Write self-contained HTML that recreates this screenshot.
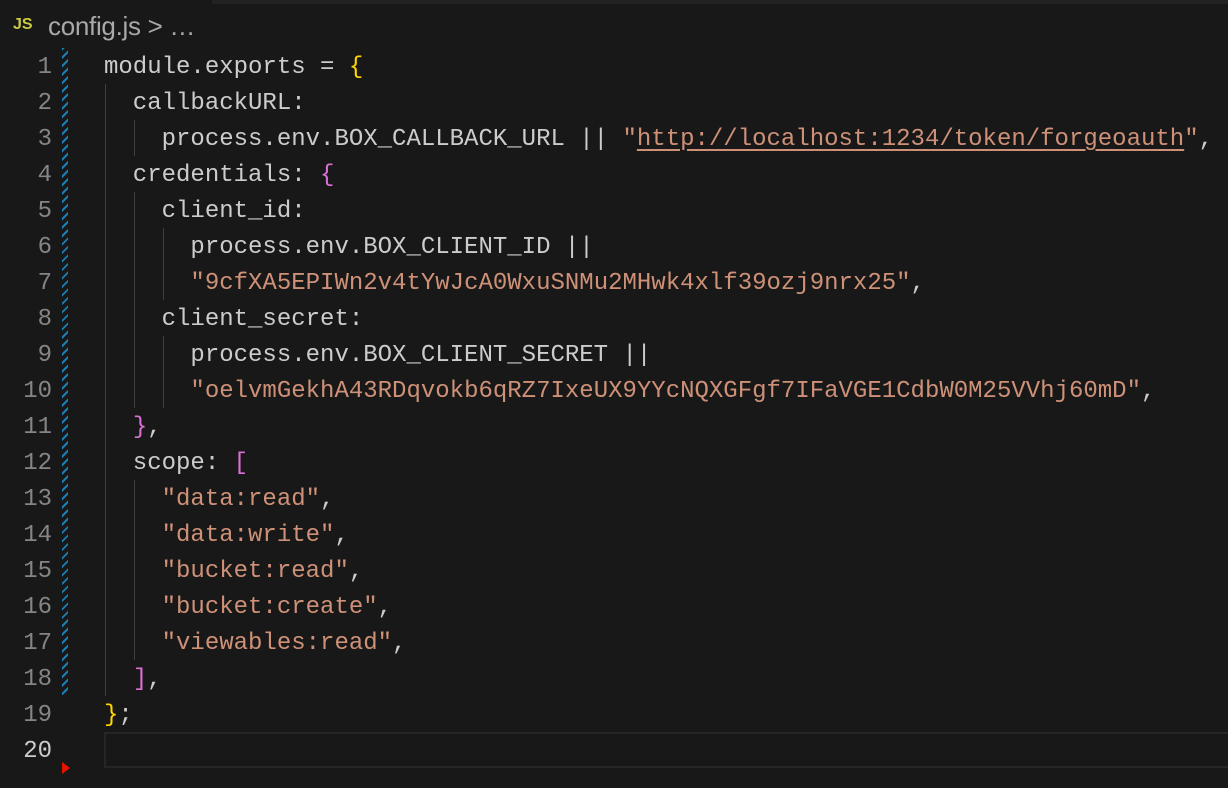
<!DOCTYPE html>
<html><head><style>
html,body{margin:0;padding:0;background:#181818;width:1228px;height:788px;overflow:hidden}
.hdr{position:absolute;left:0;top:0;width:1228px;height:48px;font-family:"Liberation Sans",sans-serif}
.top{position:absolute;left:212px;top:0;width:1016px;height:4px;background:#222}
.js{position:absolute;left:13px;top:16px;color:#cbcb41;font-weight:bold;font-size:16px}
.fn{position:absolute;left:48px;top:11px;color:#a9a9a9;font-size:26px;letter-spacing:-0.3px}
.ln{position:absolute;left:0;width:52px;text-align:right;color:#858585;font-family:"Liberation Mono",monospace;font-size:24px;line-height:36px}
.code{position:absolute;left:104px;top:50px;font-family:"Liberation Mono",monospace;font-size:24px;line-height:36px;color:#cccccc;white-space:pre}
.s{color:#ce9178}.u{color:#ce9178;text-decoration:underline;text-underline-offset:4px}
.y{color:#ffd700}.m{color:#da70d6}
.g{position:absolute;width:1px;background:#404040}
.hatch{position:absolute;left:62px;top:48px;width:6px;height:647px;background:repeating-linear-gradient(135deg,#1b7fb5 0 2px,transparent 2px 6px)}
.cur{position:absolute;left:104px;top:732px;width:1124px;height:32px;border:2px solid #262626;border-right:none}
</style></head><body>
<div class="hdr"><div class="top"></div><span class="js">JS</span><span class="fn">config.js &gt; …</span></div>
<div class="hatch"></div>
<div class="cur"></div>
<div class="g" style="left:105px;top:84px;height:612px"></div>
<div class="g" style="left:134px;top:120px;height:36px"></div>
<div class="g" style="left:134px;top:192px;height:216px"></div>
<div class="g" style="left:163px;top:228px;height:72px"></div>
<div class="g" style="left:163px;top:336px;height:72px"></div>
<div class="g" style="left:134px;top:480px;height:180px"></div>
<div class="ln" style="top:50px">1<br>2<br>3<br>4<br>5<br>6<br>7<br>8<br>9<br>10<br>11<br>12<br>13<br>14<br>15<br>16<br>17<br>18<br>19<br><span style="color:#ccc">20</span></div>
<div style="position:absolute;left:62px;top:762px;width:0;height:0;border-top:6px solid transparent;border-bottom:6px solid transparent;border-left:8px solid #e51400"></div>
<div class="code">module.exports = <span class="y">{</span>
  callbackURL:
    process.env.BOX_CALLBACK_URL || <span class="s">"</span><span class="u">http://localhost:1234/token/forgeoauth</span><span class="s">"</span>,
  credentials: <span class="m">{</span>
    client_id:
      process.env.BOX_CLIENT_ID ||
      <span class="s">"9cfXA5EPIWn2v4tYwJcA0WxuSNMu2MHwk4xlf39ozj9nrx25"</span>,
    client_secret:
      process.env.BOX_CLIENT_SECRET ||
      <span class="s">"oelvmGekhA43RDqvokb6qRZ7IxeUX9YYcNQXGFgf7IFaVGE1CdbW0M25VVhj60mD"</span>,
  <span class="m">}</span>,
  scope: <span class="m">[</span>
    <span class="s">"data:read"</span>,
    <span class="s">"data:write"</span>,
    <span class="s">"bucket:read"</span>,
    <span class="s">"bucket:create"</span>,
    <span class="s">"viewables:read"</span>,
  <span class="m">]</span>,
<span class="y">}</span>;
</div>
</body></html>
